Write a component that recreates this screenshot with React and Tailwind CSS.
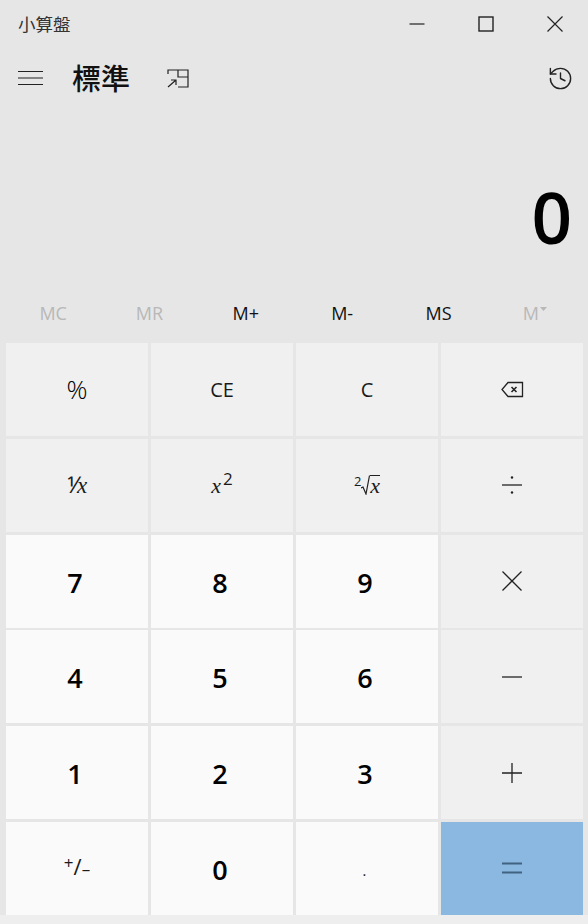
import React from 'react';
import { History } from 'lucide-react';

const sans = "font-['Open_Sans','Noto_Sans_CJK_TC',sans-serif]";

function Delete() {
  return (
    <svg width="24" height="18" viewBox="0 0 24 18" fill="none" stroke="#222" strokeWidth="1.3">
      <path d="M22.5 1.5H8L2 8.5L8 15.5H22.5Z" />
      <path d="M11.5 6L16.5 11M16.5 6L11.5 11" strokeWidth="1.6" />
    </svg>
  );
}

function Op({ children, stroke = '#222', sw = 1.3 }) {
  return (
    <svg width="22" height="22" viewBox="0 0 22 22" fill="none" stroke={stroke} strokeWidth={sw}>
      {children}
    </svg>
  );
}

function X() {
  return <span className="font-['Liberation_Serif',serif] italic">x</span>;
}

function Key({ kind = 'fn', children }) {
  const bg = { fn: 'bg-[#f0f0f0]', num: 'bg-[#fafafa]', eq: 'bg-[#8ab8e0]' }[kind];
  return (
    <div className={`${bg} flex items-center justify-center h-[93px] text-[#1a1a1a]`}>
      {children}
    </div>
  );
}

function Num({ children }) {
  return <span className="text-[27px] font-semibold text-black leading-none mr-[4px] mt-[2px]">{children}</span>;
}

function Mem({ on, children }) {
  return (
    <div className={`flex-1 flex justify-center text-[18px] ${on ? 'text-[#111] font-medium' : 'text-[#b8b8b8]'}`}>
      {children}
    </div>
  );
}

export default function App() {
  return (
    <div className={`${sans} w-[588px] h-[924px] bg-[#e6e6e6] overflow-hidden flex flex-col`}>
      <div className="flex items-center h-[48px] pl-[18px]">
        <span className="text-[17.5px] text-[#333] flex-1">小算盤</span>
        <svg width="16" height="16" viewBox="0 0 16 16" fill="none" stroke="#222" strokeWidth="1.2" className="mr-[53px]"><path d="M0.5 8H15.5" /></svg>
        <svg width="16" height="16" viewBox="0 0 16 16" fill="none" stroke="#222" strokeWidth="1.4" className="mr-[53px]"><rect x="1" y="1" width="14" height="14" /></svg>
        <svg width="16" height="16" viewBox="0 0 16 16" fill="none" stroke="#222" strokeWidth="1.2" className="mr-[25px]"><path d="M0.5 0.5L15.5 15.5M15.5 0.5L0.5 15.5" /></svg>
      </div>

      <div className="flex items-center h-[60px] pl-[18px] pr-[14px]">
        <svg width="25" height="16" viewBox="0 0 25 16" fill="none" stroke="#222" strokeWidth="1.2"><path d="M0 1.5H25M0 8H25M0 14.5H25" /></svg>
        <span className="ml-[29px] text-[29px] font-medium text-[#111] leading-none">標準</span>
        <svg width="22" height="19" viewBox="0 0 22 19" fill="none" stroke="#222" strokeWidth="1.2" className="ml-[37px]">
          <path d="M1 5V1H21V18H11M11 1V8H21" />
          <path d="M1 18L9 11M4 11H9V16" />
        </svg>
        <History size={27} strokeWidth={1.25} color="#222" className="ml-auto" />
      </div>

      <div className="h-[172px] flex items-center justify-end pr-[16px] pt-[44px]">
        <span className="text-[71px] font-semibold text-black leading-none">0</span>
      </div>

      <div className="flex items-center h-[63px] pt-[4px] px-[5px]">
        <Mem>MC</Mem>
        <Mem>MR</Mem>
        <Mem on>M+</Mem>
        <Mem on>M-</Mem>
        <Mem on>MS</Mem>
        <Mem>
          M
          <svg width="7" height="4" viewBox="0 0 7 4" fill="#b8b8b8" className="mt-[7px] ml-[1px]"><path d="M0 0H7L3.5 4Z" /></svg>
        </Mem>
      </div>

      <div className="grid grid-cols-4 gap-x-[3px] gap-y-[2.8px] ml-[6px] mr-[5px]">
        <Key><span className="text-[26px] font-light text-black">%</span></Key>
        <Key><span className="text-[20px]">CE</span></Key>
        <Key><span className="text-[20px]">C</span></Key>
        <Key><Delete /></Key>

        <Key><span className="text-[23px]">⅟<X /></span></Key>
        <Key><span className="text-[22px]"><X /><sup className="text-[17px] ml-[2px]">2</sup></span></Key>
        <Key>
          <div className="flex items-end h-[20px]">
            <span className="text-[13px] leading-none self-start">2</span>
            <svg width="9" height="20" viewBox="0 0 9 20" fill="none" stroke="#222" strokeWidth="1.2"><path d="M0 13L2 12L5 19L8.5 0.5" /></svg>
            <span className="border-t border-[#222] h-[20px] text-[22px] leading-[17px]"><X /></span>
          </div>
        </Key>
        <Key>
          <Op><path d="M1 11H21" /><circle cx="11" cy="3.5" r="1.2" fill="#222" stroke="none" /><circle cx="11" cy="18.5" r="1.2" fill="#222" stroke="none" /></Op>
        </Key>

        <Key kind="num"><Num>7</Num></Key>
        <Key kind="num"><Num>8</Num></Key>
        <Key kind="num"><Num>9</Num></Key>
        <Key><Op><path d="M1.5 1.5L20.5 20.5M20.5 1.5L1.5 20.5" /></Op></Key>

        <Key kind="num"><Num>4</Num></Key>
        <Key kind="num"><Num>5</Num></Key>
        <Key kind="num"><Num>6</Num></Key>
        <Key><Op><path d="M1 11H21" /></Op></Key>

        <Key kind="num"><Num>1</Num></Key>
        <Key kind="num"><Num>2</Num></Key>
        <Key kind="num"><Num>3</Num></Key>
        <Key><Op><path d="M1 11H21M11 1V21" /></Op></Key>

        <Key kind="num">
          <div className="flex h-[20px] mb-[4px]">
            <span className="text-[17px] leading-[14px] self-start">+</span>
            <span className="text-[22px] leading-[20px]">/</span>
            <span className="text-[17px] leading-[14px] self-end">–</span>
          </div>
        </Key>
        <Key kind="num"><Num>0</Num></Key>
        <Key kind="num"><span className="text-[12px] mr-[5px] mt-[8px] font-semibold">.</span></Key>
        <Key kind="eq"><Op stroke="#3f6380" sw={1.8}><path d="M1 6.5H21M1 15.5H21" /></Op></Key>
      </div>

      <div className="flex-1 bg-[#eeeeee]" />
    </div>
  );
}
